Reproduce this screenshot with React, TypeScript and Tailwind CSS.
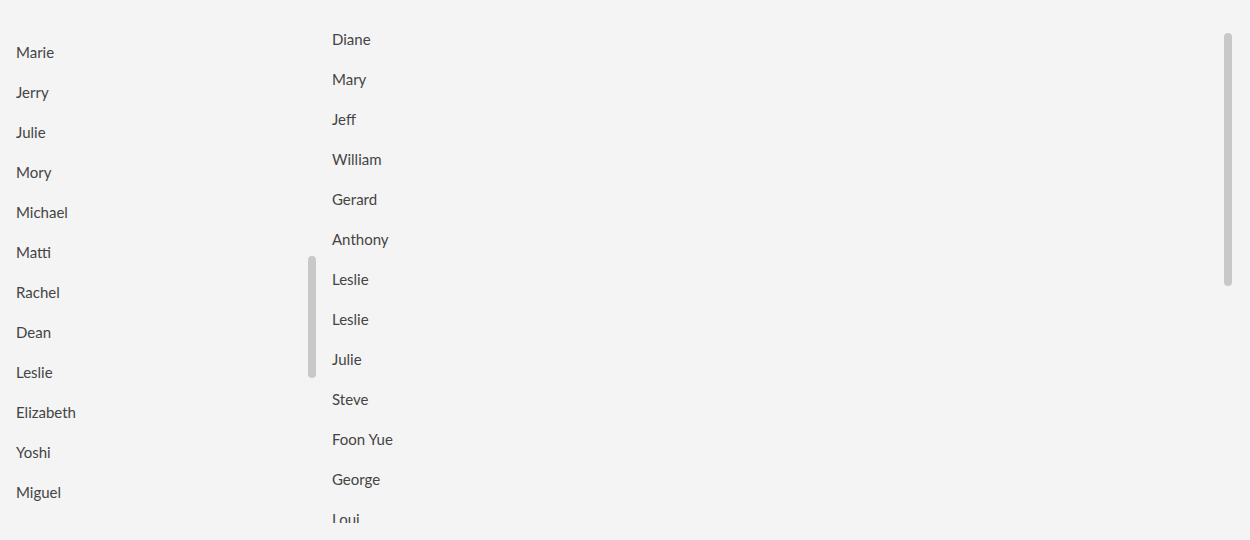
const leftNames = [
  'Marie', 'Jerry', 'Julie', 'Mory', 'Michael', 'Matti',
  'Rachel', 'Dean', 'Leslie', 'Elizabeth', 'Yoshi', 'Miguel',
]

const rightNames = [
  'Diane', 'Mary', 'Jeff', 'William', 'Gerard', 'Anthony', 'Leslie',
  'Leslie', 'Julie', 'Steve', 'Foon Yue', 'George', 'Loui',
]

function NameRow({ name }: { name: string }) {
  return (
    <div className="h-10 flex items-center px-4 text-[15px] text-[#444444] shrink-0">
      {name}
    </div>
  )
}

export default function App() {
  return (
    <div
      className="w-[1250px] h-[540px] bg-[#f4f4f4] flex overflow-hidden"
      style={{ fontFamily: 'Lato, "Open Sans", sans-serif' }}
    >
      {/* left list */}
      <div className="relative w-[316px] pt-8 h-[512px]">
        {leftNames.map((n, i) => (
          <NameRow key={i} name={n} />
        ))}
        <div className="absolute right-0 top-[256px] w-2 h-[122px] rounded-full bg-[#c8c8c8]" />
      </div>

      {/* right list */}
      <div className="relative w-[918px] mt-[19px] h-[504px] overflow-hidden">
        <div className="flex flex-col">
          {rightNames.map((n, i) => (
            <NameRow key={i} name={n} />
          ))}
        </div>
        <div className="absolute right-[2px] top-[14px] w-2 h-[253px] rounded-full bg-[#c8c8c8]" />
      </div>
    </div>
  )
}
